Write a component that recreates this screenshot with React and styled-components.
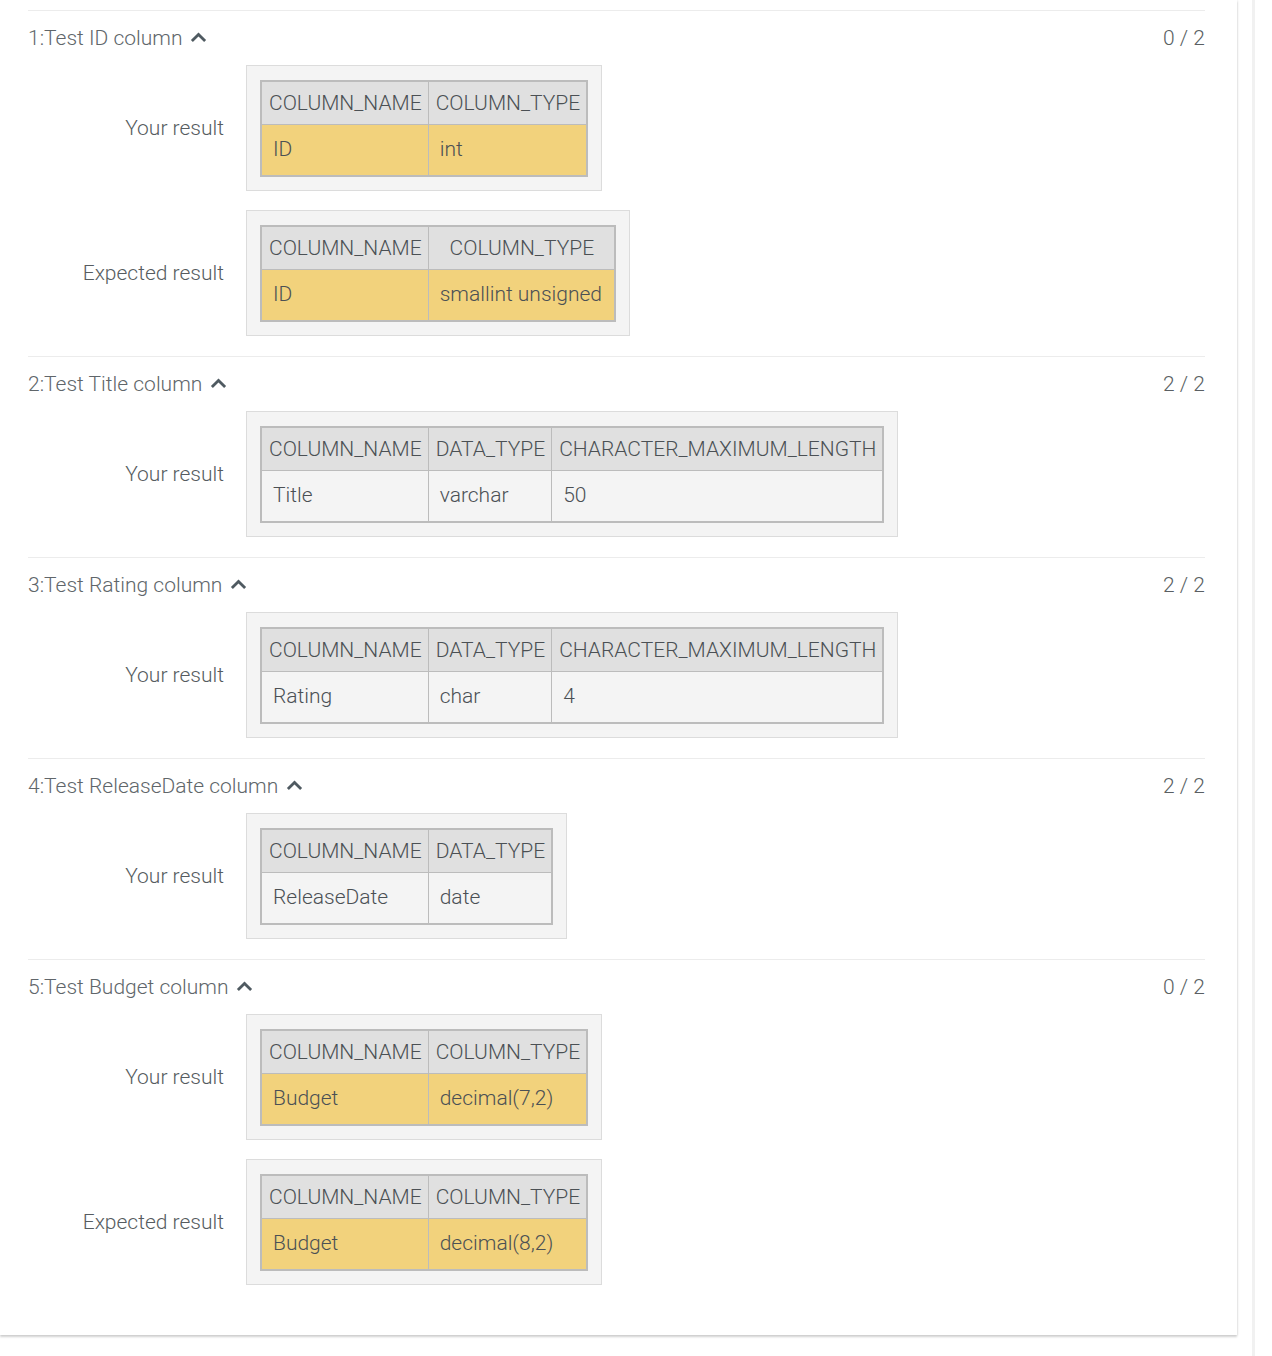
import React from "react";
import styled, { createGlobalStyle } from "styled-components";

const GlobalStyle = createGlobalStyle`
  html, body {
    margin: 0;
    padding: 0;
    background: #fff;
  }
  body {
    font-family: Roboto, "Noto Sans", "Liberation Sans", sans-serif;
    font-weight: 300;
  }
`;

const tests = [
  {
    id: 1,
    title: "Test ID column",
    score: "0 / 2",
    results: [
      {
        label: "Your result",
        head: ["COLUMN_NAME", "COLUMN_TYPE"],
        rows: [["ID", "int"]],
        wrong: true,
      },
      {
        label: "Expected result",
        head: ["COLUMN_NAME", "COLUMN_TYPE"],
        rows: [["ID", "smallint unsigned"]],
        wrong: true,
      },
    ],
  },
  {
    id: 2,
    title: "Test Title column",
    score: "2 / 2",
    results: [
      {
        label: "Your result",
        head: ["COLUMN_NAME", "DATA_TYPE", "CHARACTER_MAXIMUM_LENGTH"],
        rows: [["Title", "varchar", "50"]],
      },
    ],
  },
  {
    id: 3,
    title: "Test Rating column",
    score: "2 / 2",
    results: [
      {
        label: "Your result",
        head: ["COLUMN_NAME", "DATA_TYPE", "CHARACTER_MAXIMUM_LENGTH"],
        rows: [["Rating", "char", "4"]],
      },
    ],
  },
  {
    id: 4,
    title: "Test ReleaseDate column",
    score: "2 / 2",
    results: [
      {
        label: "Your result",
        head: ["COLUMN_NAME", "DATA_TYPE"],
        rows: [["ReleaseDate", "date"]],
      },
    ],
  },
  {
    id: 5,
    title: "Test Budget column",
    score: "0 / 2",
    results: [
      {
        label: "Your result",
        head: ["COLUMN_NAME", "COLUMN_TYPE"],
        rows: [["Budget", "decimal(7,2)"]],
        wrong: true,
      },
      {
        label: "Expected result",
        head: ["COLUMN_NAME", "COLUMN_TYPE"],
        rows: [["Budget", "decimal(8,2)"]],
        wrong: true,
      },
    ],
  },
];

const ChevronUp = () => (
  <svg width="17" height="11" viewBox="0 0 17 11">
    <path
      d="M1.9 9.1 L8.5 2.5 L15.1 9.1"
      fill="none"
      stroke="#4f5a61"
      strokeWidth="2.8"
    />
  </svg>
);

const App = () => {
  return (
    <Page>
      <GlobalStyle />
      <Card>
        {tests.map((t) => (
          <Section key={t.id}>
            <Heading>
              <Title>
                {t.id}:{t.title}
                <Toggle>
                  <ChevronUp />
                </Toggle>
              </Title>
              <Score>{t.score}</Score>
            </Heading>
            <Results>
              {t.results.map((r) => (
                <ResultRow key={r.label}>
                  <Label>{r.label}</Label>
                  <ResultBox>
                    <Table>
                      <thead>
                        <tr>
                          {r.head.map((h, i) => (
                            <Th key={h} $last={i === r.head.length - 1}>
                              {h}
                            </Th>
                          ))}
                        </tr>
                      </thead>
                      <tbody>
                        {r.rows.map((row, ri) => (
                          <tr key={ri}>
                            {row.map((c, i) => (
                              <Td
                                key={i}
                                $wrong={r.wrong}
                                $last={i === row.length - 1}
                              >
                                {c}
                              </Td>
                            ))}
                          </tr>
                        ))}
                      </tbody>
                    </Table>
                  </ResultBox>
                </ResultRow>
              ))}
            </Results>
          </Section>
        ))}
      </Card>
      <RightRule />
    </Page>
  );
};

const Page = styled.div`
  display: flex;
  align-items: stretch;
  min-height: 100vh;
`;

const Card = styled.div`
  width: 1237px;
  box-sizing: border-box;
  padding: 10px 32px 30px 28px;
  background: #fff;
  align-self: flex-start;
  box-shadow: 0 2px 2px rgba(0, 0, 0, 0.18), 1px 0 2px rgba(0, 0, 0, 0.06);
`;

const RightRule = styled.div`
  width: 3px;
  margin-left: 15px;
  background: #f1f1f1;
`;

const Section = styled.div`
  border-top: 1px solid #ececec;
  padding-bottom: 20px;
`;

const Heading = styled.div`
  display: flex;
  justify-content: space-between;
  align-items: center;
  height: 30px;
  margin: 12px 0;
  font-size: 21px;
  color: #60666a;
`;

const Title = styled.div`
  display: flex;
  align-items: center;
`;

const Toggle = styled.span`
  display: inline-flex;
  margin-left: 8px;
  margin-top: -2px;
`;

const Score = styled.div`
  color: #5a5f63;
`;

const Results = styled.div`
  display: flex;
  flex-direction: column;
  gap: 19px;
`;

const ResultRow = styled.div`
  display: flex;
  align-items: center;
`;

const Label = styled.div`
  width: 196px;
  margin-right: 22px;
  text-align: right;
  font-size: 21px;
  color: #565c60;
`;

const ResultBox = styled.div`
  border: 1px solid #dcdcdc;
  background: #f4f4f4;
  padding: 14px 13px 13px;
`;

const Table = styled.table`
  border-collapse: separate;
  border-spacing: 0;
  border: 2px solid #bcbcbc;
  font-size: 21px;
  line-height: 23px;
  color: #4b5054;
`;

const Th = styled.th`
  font-weight: 300;
  background: #e0e0e0;
  padding: 10px 6px 9px 7px;
  text-align: center;
  white-space: nowrap;
  border-bottom: 1px solid #bcbcbc;
  border-right: ${(p) => (p.$last ? "none" : "1px solid #bcbcbc")};
`;

const Td = styled.td`
  background: ${(p) => (p.$wrong ? "#f2d27c" : "#f4f4f4")};
  padding: 13px 12px 14px 11px;
  text-align: left;
  white-space: nowrap;
  border-right: ${(p) => (p.$last ? "none" : "1px solid #bcbcbc")};
`;

export default App;
